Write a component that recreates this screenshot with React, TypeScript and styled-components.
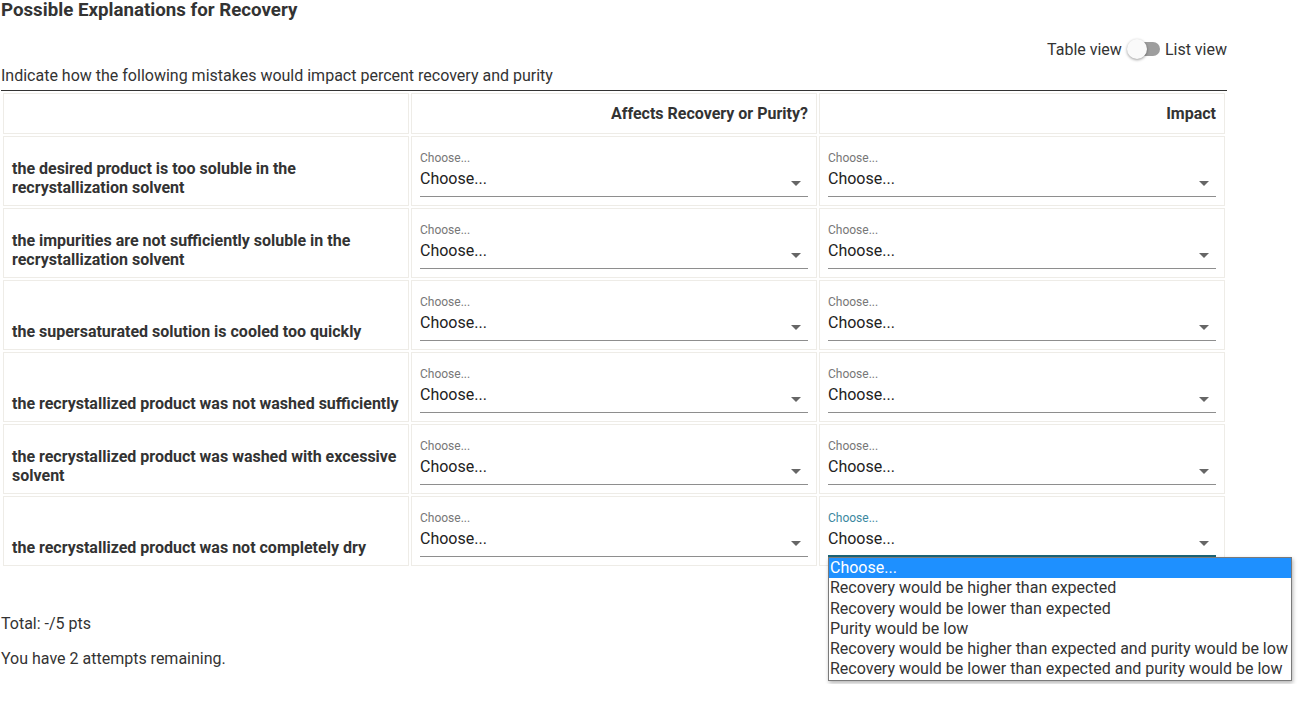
import React, { useState } from "react"
import styled, { createGlobalStyle } from "styled-components"

const GlobalStyle = createGlobalStyle`
  body {
    margin: 0;
    background: #fff;
    font-family: Roboto, "Liberation Sans", Arial, sans-serif;
    color: #333;
  }
`

const impactOptions = [
  "Choose...",
  "Recovery would be higher than expected",
  "Recovery would be lower than expected",
  "Purity would be low",
  "Recovery would be higher than expected and purity would be low",
  "Recovery would be lower than expected and purity would be low",
]

const mistakes = [
  "the desired product is too soluble in the recrystallization solvent",
  "the impurities are not sufficiently soluble in the recrystallization solvent",
  "the supersaturated solution is cooled too quickly",
  "the recrystallized product was not washed sufficiently",
  "the recrystallized product was washed with excessive solvent",
  "the recrystallized product was not completely dry",
]

interface SelectProps {
  open?: boolean
  options?: string[]
}

const SelectField: React.FC<SelectProps> = ({ open, options = [] }) => {
  return (
    <Field>
      <FieldLabel $focused={open}>Choose...</FieldLabel>
      <FieldValue $focused={open}>
        Choose...
        <Arrow />
      </FieldValue>
      {open && (
        <OptionList>
          {options.map((opt, i) => (
            <Option key={opt} $active={i === 0}>
              {opt}
            </Option>
          ))}
        </OptionList>
      )}
    </Field>
  )
}

export default function App() {
  const [listView, setListView] = useState(false)

  return (
    <Page>
      <GlobalStyle />
      <Title>Possible Explanations for Recovery</Title>
      <ToggleRow>
        <span>Table view</span>
        <Switch onClick={() => setListView((v) => !v)}>
          <Track />
          <Thumb $on={listView} />
        </Switch>
        <span>List view</span>
      </ToggleRow>
      <Instructions>Indicate how the following mistakes would impact percent recovery and purity</Instructions>
      <TableWrap>
        <Table>
          <colgroup>
            <col style={{ width: "33.33%" }} />
            <col style={{ width: "33.33%" }} />
            <col style={{ width: "33.33%" }} />
          </colgroup>
          <thead>
            <tr>
              <HeadCell />
              <HeadCell>Affects Recovery or Purity?</HeadCell>
              <HeadCell>Impact</HeadCell>
            </tr>
          </thead>
          <tbody>
            {mistakes.map((m, i) => (
              <tr key={m}>
                <LabelCell>{m}</LabelCell>
                <SelectCell>
                  <SelectField />
                </SelectCell>
                <SelectCell>
                  <SelectField open={i === mistakes.length - 1} options={impactOptions} />
                </SelectCell>
              </tr>
            ))}
          </tbody>
        </Table>
      </TableWrap>
      <Footer>
        <FooterLine>Total: -/5 pts</FooterLine>
        <FooterLine>You have 2 attempts remaining.</FooterLine>
      </Footer>
    </Page>
  )
}

const Page = styled.div`
  width: 1226px;
  padding-left: 1px;
  font-size: 16px;
`

const Title = styled.h3`
  margin: 0;
  font-size: 18.72px;
  line-height: 20px;
  font-weight: 700;
  color: #333;
`

const ToggleRow = styled.div`
  display: flex;
  justify-content: flex-end;
  align-items: center;
  gap: 5px;
  height: 24px;
  margin-top: 17px;
  font-size: 16px;
  color: #333;
`

const Switch = styled.div`
  position: relative;
  width: 33px;
  height: 20px;
  cursor: pointer;
`

const Track = styled.div`
  position: absolute;
  left: 3px;
  top: 3px;
  width: 30px;
  height: 14px;
  border-radius: 7px;
  background: #9e9e9e;
`

const Thumb = styled.div<{ $on?: boolean }>`
  position: absolute;
  top: 0;
  left: ${({ $on }) => ($on ? "13px" : "0")};
  width: 20px;
  height: 20px;
  border-radius: 50%;
  background: #fafafa;
  box-shadow: 0 1px 3px rgba(0, 0, 0, 0.4);
`

const Instructions = styled.p`
  margin: 5px 0 0;
  padding-bottom: 4px;
  font-size: 16px;
  line-height: 20px;
  color: #333;
`

const TableWrap = styled.div`
  border-top: 1px solid #333;
`

const Table = styled.table`
  width: 100%;
  border-collapse: separate;
  border-spacing: 2px;
  table-layout: fixed;
`

const HeadCell = styled.th`
  box-sizing: border-box;
  height: 41px;
  padding: 0 8px;
  border: 1px solid #eeece7;
  text-align: right;
  vertical-align: middle;
  font-size: 16px;
  font-weight: 700;
  color: #333;
`

const LabelCell = styled.td`
  box-sizing: border-box;
  height: 70px;
  padding: 0 8px 8px;
  border: 1px solid #eeece7;
  vertical-align: bottom;
  font-size: 16px;
  line-height: 19px;
  font-weight: 700;
  color: #333;
`

const SelectCell = styled.td`
  box-sizing: border-box;
  height: 70px;
  padding: 0 8px 8px;
  border: 1px solid #eeece7;
  vertical-align: bottom;
`

const Field = styled.div`
  position: relative;
`

const FieldLabel = styled.div<{ $focused?: boolean }>`
  font-size: 12px;
  line-height: 14px;
  margin-bottom: 4px;
  color: ${({ $focused }) => ($focused ? "#3c88a0" : "#777")};
`

const FieldValue = styled.div<{ $focused?: boolean }>`
  position: relative;
  font-size: 16px;
  line-height: 20px;
  padding-bottom: ${({ $focused }) => ($focused ? "6px" : "7px")};
  color: #222;
  border-bottom: ${({ $focused }) => ($focused ? "2px solid #1b6476" : "1px solid #8e8e8e")};
`

const Arrow = styled.span`
  position: absolute;
  right: 7px;
  top: 12px;
  width: 0;
  height: 0;
  border-left: 5px solid transparent;
  border-right: 5px solid transparent;
  border-top: 5px solid #666;
`

const OptionList = styled.div`
  position: absolute;
  top: 100%;
  left: 0;
  z-index: 10;
  width: max-content;
  background: #fff;
  border: 1px solid #7a7a7a;
  box-shadow: 1px 2px 4px rgba(0, 0, 0, 0.3);
`

const Option = styled.div<{ $active?: boolean }>`
  padding: 0 3px 0 1px;
  font-size: 16px;
  line-height: 20.3px;
  color: ${({ $active }) => ($active ? "#fff" : "#333")};
  background: ${({ $active }) => ($active ? "#1e90ff" : "transparent")};
`

const Footer = styled.div`
  padding-top: 46px;
`

const FooterLine = styled.p`
  margin: 0 0 15px;
  font-size: 16px;
  line-height: 20px;
  color: #333;
`
